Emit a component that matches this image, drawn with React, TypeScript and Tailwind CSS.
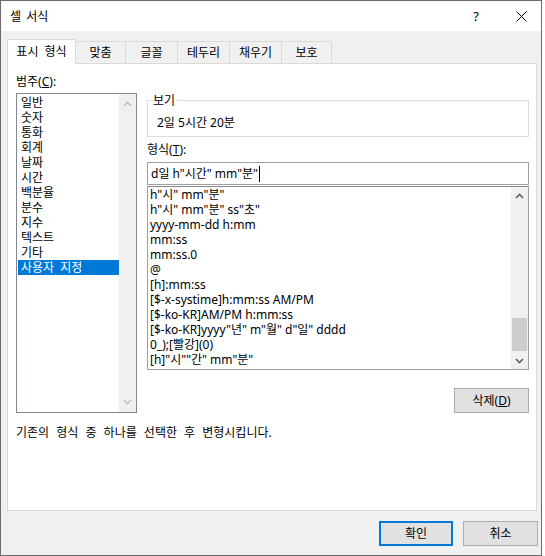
import React from "react";

const font = { fontFamily: '"Noto Sans", "Noto Sans CJK KR", sans-serif' };

const categories = [
  "일반",
  "숫자",
  "통화",
  "회계",
  "날짜",
  "시간",
  "백분율",
  "분수",
  "지수",
  "텍스트",
  "기타",
  "사용자 지정",
];

const formats = [
  'h"시" mm"분"',
  'h"시" mm"분" ss"초"',
  "yyyy-mm-dd h:mm",
  "mm:ss",
  "mm:ss.0",
  "@",
  "[h]:mm:ss",
  "[$-x-systime]h:mm:ss AM/PM",
  "[$-ko-KR]AM/PM h:mm:ss",
  '[$-ko-KR]yyyy"년" m"월" d"일" dddd',
  "0_);[빨강](0)",
  '[h]"시""간" mm"분"',
];

function Chevron({ up, color }: { up?: boolean; color: string }) {
  return (
    <svg width="9" height="6" viewBox="0 0 9 6" className="block">
      <path
        d={up ? "M1 5 L4.5 1.5 L8 5" : "M1 1 L4.5 4.5 L8 1"}
        fill="none"
        stroke={color}
        strokeWidth="1.6"
      />
    </svg>
  );
}

const tabs = [
  { label: "맞춤", w: "w-[50px]" },
  { label: "글꼴", w: "w-[52px]" },
  { label: "테두리", w: "w-[52px]" },
  { label: "채우기", w: "w-[52px]" },
  { label: "보호", w: "w-[50px]" },
];

export default function App() {
  return (
    <div
      className="w-[542px] h-[556px] border border-[#6b6b6b] bg-[#f0f0f0] text-[12px] leading-[15px] text-black flex flex-col"
      style={font}
    >
      {/* title bar */}
      <div className="h-[30px] bg-white flex items-center pl-[9px] shrink-0">
        <span className="text-[12px] [word-spacing:2px]">셀 서식</span>
        <span className="ml-auto mr-[37px] text-[13px]">?</span>
        <svg width="11" height="11" viewBox="0 0 11 11" className="mr-[14px]">
          <path d="M0.5 0.5 L10.5 10.5 M10.5 0.5 L0.5 10.5" stroke="#000" strokeWidth="1" />
        </svg>
      </div>

      {/* tabs */}
      <div className="mt-[8px] pl-[6px] h-[24px] flex items-end shrink-0">
        <div className="relative z-10 -mb-px h-[25px] w-[69px] bg-white border-x border-t border-[#d9d9d9] flex items-center justify-center pb-[2px] [word-spacing:3px]">
          표시 형식
        </div>
        {tabs.map((t) => (
          <div
            key={t.label}
            className={`${t.w} h-[22px] border-t border-r border-[#d9d9d9] bg-[#f0f0f0] flex items-center justify-center`}
          >
            {t.label}
          </div>
        ))}
      </div>

      {/* panel */}
      <div className="ml-[6px] w-[530px] h-[448px] bg-white border border-[#d9d9d9] pl-[8px] pt-[10px] shrink-0">
        <div className="flex">
          <div className="w-[121px]">
            <div className="h-[15px]">
              범주(<span className="underline">C</span>):
            </div>
            <div className="mt-[4px] h-[320px] border border-[#828790] flex">
              <div className="flex-1 pt-px pl-px">
                {categories.map((c, i) => (
                  <div
                    key={c}
                    className={`h-[15px] pl-[3px] [word-spacing:3px] ${
                      i === categories.length - 1 ? "bg-[#0078d7] text-white" : ""
                    }`}
                  >
                    {c}
                  </div>
                ))}
              </div>
              <div className="w-[17px] bg-[#f0f0f0] flex flex-col items-center justify-between py-[7px]">
                <Chevron up color="#c2c2c2" />
                <Chevron color="#c2c2c2" />
              </div>
            </div>
          </div>

          <div className="ml-[10px] w-[382px]">
            <div className="relative mt-[26px] h-[37px] border border-[#dcdcdc] pl-[9px] pt-[14px]">
              <span className="absolute -top-[8px] left-[3px] bg-white px-[2px]">보기</span>
              2일 5시간 20분
            </div>
            <div className="mt-[5px] h-[15px]">
              형식(<span className="underline">T</span>):
            </div>
            <div className="mt-[5px] h-[23px] border border-[#a0a0a0] pl-[3px] flex items-center">
              <span>d일 h"시간" mm"분"</span>
              <span className="ml-px inline-block w-px h-[16px] bg-black" />
            </div>
            <div className="h-[184px] border border-[#a0a0a0] border-t-[#828790] mt-px flex">
              <div className="flex-1 pl-[2px] overflow-hidden">
                {formats.map((f) => (
                  <div key={f} className="h-[15px] whitespace-nowrap">
                    {f}
                  </div>
                ))}
              </div>
              <div className="w-[17px] bg-[#f0f0f0] flex flex-col items-center">
                <div className="h-[17px] flex items-center justify-center">
                  <Chevron up color="#606060" />
                </div>
                <div className="mt-[114px] h-[33px] w-[15px] bg-[#cdcdcd]" />
                <div className="mt-auto h-[17px] flex items-center justify-center">
                  <Chevron color="#606060" />
                </div>
              </div>
            </div>
            <div className="mt-[18px] flex justify-end">
              <div className="w-[75px] h-[25px] bg-[#e1e1e1] border border-[#adadad] flex items-center justify-center">
                삭제(<span className="underline">D</span>)
              </div>
            </div>
          </div>
        </div>

        <div className="mt-[12px] [word-spacing:4px]">기존의 형식 중 하나를 선택한 후 변형시킵니다.</div>
      </div>

      {/* buttons */}
      <div className="mt-[10px] flex justify-end gap-[10px] pr-[3px]">
        <div className="w-[74px] h-[25px] bg-[#e1e1e1] border-2 border-[#0078d7] flex items-center justify-center">
          확인
        </div>
        <div className="w-[75px] h-[25px] bg-[#e1e1e1] border border-[#adadad] flex items-center justify-center">
          취소
        </div>
      </div>
    </div>
  );
}
